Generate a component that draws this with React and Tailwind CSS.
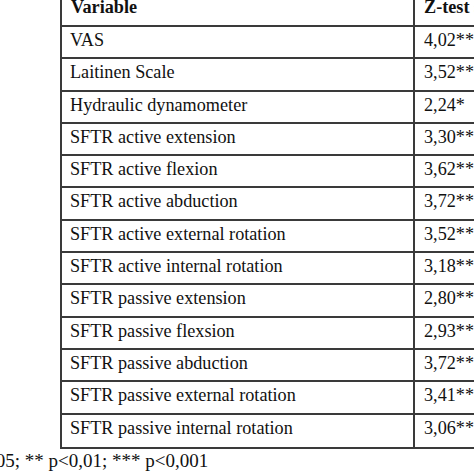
import React from 'react';

const rows = [
  ['VAS', '4,02**'],
  ['Laitinen Scale', '3,52**'],
  ['Hydraulic dynamometer', '2,24*'],
  ['SFTR active extension', '3,30**'],
  ['SFTR active flexion', '3,62**'],
  ['SFTR active abduction', '3,72**'],
  ['SFTR active external rotation', '3,52**'],
  ['SFTR active internal rotation', '3,18**'],
  ['SFTR passive extension', '2,80**'],
  ['SFTR passive flexsion', '2,93**'],
  ['SFTR passive abduction', '3,72**'],
  ['SFTR passive external rotation', '3,41**'],
  ['SFTR passive internal rotation', '3,06**'],
];

export default function App() {
  return (
    <div className="w-[474px] h-[474px] overflow-hidden bg-white text-[#111] font-['Liberation_Serif',serif]">
      {/* table, cropped at top and right */}
      <div className="ml-[60px] mt-[-6px] w-[480px] border-l-2 border-b-2 border-[#3a3a3a]">
        <div className="flex h-[33px] border-b-2 border-[#3a3a3a]">
          <div className="w-[351px] pl-[9px] pt-[3px] text-[18.2px] font-bold leading-[20px]">Variable</div>
          <div className="flex-1 border-l-2 border-[#3a3a3a] pl-[9px] pt-[3px] text-[18.2px] font-bold leading-[20px]">
            Z-test score
          </div>
        </div>
        {rows.map(([name, z], i) => (
          <div
            key={name}
            className={`flex h-[32.3px] ${i < rows.length - 1 ? 'border-b-2 border-[#3a3a3a]' : ''}`}
          >
            <div className="w-[351px] pl-[8px] pt-[3px] text-[18.2px] leading-[20px]">{name}</div>
            <div className="flex-1 border-l-2 border-[#3a3a3a] pl-[9px] pt-[3px] text-[18.2px] leading-[20px]">
              {z}
            </div>
          </div>
        ))}
      </div>
      <div className="ml-[-53px] mt-[1px] whitespace-nowrap text-[19px] leading-[22px]">
        * p&lt;0,05; ** p&lt;0,01; *** p&lt;0,001
      </div>
    </div>
  );
}
